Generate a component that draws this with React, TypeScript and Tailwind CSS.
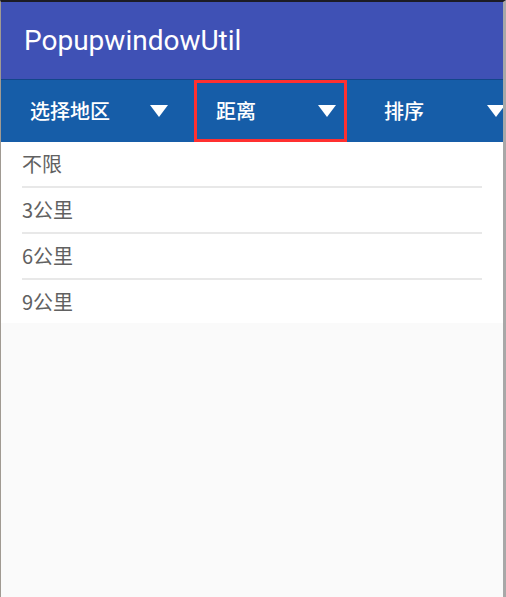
const options = ["不限", "3公里", "6公里", "9公里"];

function Triangle() {
  return (
    <svg width="18" height="12" viewBox="0 0 18 12" className="shrink-0">
      <path d="M0 0 H18 L9 12 Z" fill="#ffffff" />
    </svg>
  );
}

export default function App() {
  return (
    <div
      className="w-[506px] h-[597px] flex flex-col overflow-hidden border-t-2 border-t-[#1c1c24] border-l border-l-[#a09a92] border-r-[3px] border-r-[#a8a8a8] bg-[#fafafa]"
      style={{ fontFamily: '"Noto Sans CJK SC", sans-serif' }}
    >
      {/* App bar */}
      <div className="h-[77px] shrink-0 bg-[#3f51b5] flex items-center pl-[23px]">
        <span className="text-[28px] text-white font-['Roboto',sans-serif] leading-none">
          PopupwindowUtil
        </span>
      </div>

      {/* Filter tabs */}
      <div className="h-[63px] shrink-0 bg-[#165da8] border-t border-t-[#12468a] flex text-white text-[20px] font-medium overflow-hidden">
        <div className="w-[193px] shrink-0 flex items-center pl-[29px] pr-[26px]">
          <span>选择地区</span>
          <span className="ml-auto">
            <Triangle />
          </span>
        </div>
        <div className="w-[153px] shrink-0 flex items-center border-[3px] border-[#ff3030] pl-[19px] pr-[8px]">
          <span>距离</span>
          <span className="ml-auto">
            <Triangle />
          </span>
        </div>
        <div className="shrink-0 flex items-center pl-[37px]">
          <span>排序</span>
          <span className="ml-[63px]">
            <Triangle />
          </span>
        </div>
      </div>

      {/* Popup list */}
      <div className="bg-white px-[21px] shrink-0">
        {options.map((o, i) => (
          <div
            key={o}
            className={`flex items-center text-[20px] text-[#616161] ${
              i === 0
                ? "h-[44px]"
                : i === options.length - 1
                  ? "h-[45px] border-t-2 border-t-[#e8e8e8]"
                  : "h-[46px] border-t-2 border-t-[#e8e8e8]"
            }`}
          >
            {o}
          </div>
        ))}
      </div>
    </div>
  );
}
